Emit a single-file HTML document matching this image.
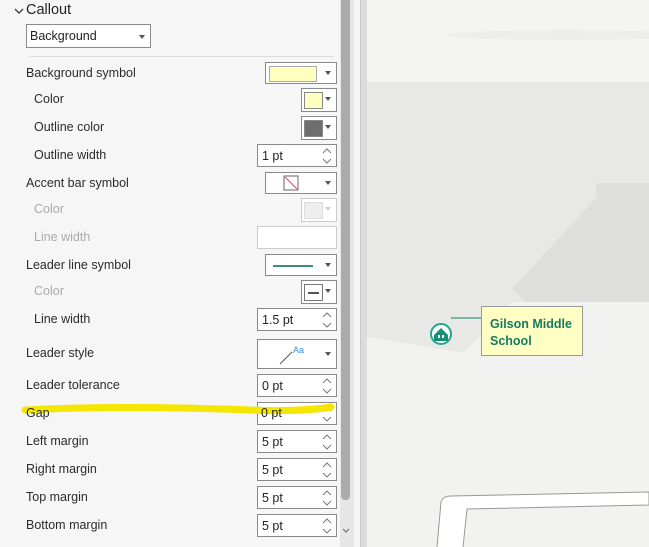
<!DOCTYPE html><html><head><style>
body{margin:0;width:649px;height:547px;overflow:hidden;background:#f5f6f5;font-family:"Liberation Sans",sans-serif;font-size:12.5px;color:#222;position:relative}
.a{position:absolute}
.lbl{position:absolute;left:26px;color:#2b2b2b}
.sub{left:34px}
.dis{color:#aaa}
.box{position:absolute;border:1px solid #8a8a8a;background:#fff;box-sizing:border-box}
.sp{left:257px;width:80px;height:23px}
.sp span{position:absolute;left:4px;top:4px}
.sp svg{position:absolute;right:4px;top:3px}
.dd{position:absolute;right:5px;top:8px;width:0;height:0;border-left:3px solid transparent;border-right:3px solid transparent;border-top:4px solid #555}
</style></head><body>
<svg class="a" style="left:14px;top:7px" width="10" height="8"><path d="M1 2 L5 6 L9 2" stroke="#444" stroke-width="1.4" fill="none"/></svg>
<div class="a" style="left:26px;top:2px;font-size:14.5px;color:#222">Callout</div>
<div class="box" style="left:26px;top:24px;width:125px;height:24px"><span class="a" style="left:3px;top:4px">Background</span><div class="dd" style="top:10px"></div></div>
<div class="a" style="left:29px;top:56px;width:305px;height:1px;background:#ddd"></div>

<div class="lbl" style="top:66px">Background symbol</div>
<div class="box" style="left:265px;top:62px;width:72px;height:22px"><div class="a" style="left:3px;top:3px;width:46px;height:14px;background:#ffffc0;border:1px solid #aaa"></div><div class="dd"></div></div>
<div class="lbl sub" style="top:92px">Color</div>
<div class="box" style="left:301px;top:88px;width:36px;height:24px"><div class="a" style="left:2px;top:3px;width:17px;height:15px;background:#ffffc0;border:1px solid #888"></div><div class="dd"></div></div>
<div class="lbl sub" style="top:120px">Outline color</div>
<div class="box" style="left:301px;top:116px;width:36px;height:24px"><div class="a" style="left:2px;top:3px;width:17px;height:15px;background:#6e6e6e;border:1px solid #888"></div><div class="dd"></div></div>
<div class="lbl sub" style="top:148px">Outline width</div>
<div class="box sp" style="top:144px"><span>1 pt</span><svg width="10" height="16"><path d="M1 5 L5 1 L9 5 M1 11 L5 15 L9 11" stroke="#777" fill="none"/></svg></div>
<div class="lbl" style="top:176px">Accent bar symbol</div>
<div class="box" style="left:265px;top:172px;width:72px;height:22px"><svg class="a" style="left:17px;top:2px" width="16" height="16"><rect x="1" y="1" width="14" height="14" fill="#fff" stroke="#666"/><line x1="2" y1="2" x2="14" y2="14" stroke="#c55"/></svg><div class="dd"></div></div>
<div class="lbl sub dis" style="top:202px">Color</div>
<div class="box" style="left:301px;top:198px;width:36px;height:24px;border-color:#ccc"><div class="a" style="left:2px;top:3px;width:17px;height:15px;background:#eee;border:1px solid #ddd"></div><div class="dd" style="border-top-color:#ccc"></div></div>
<div class="lbl sub dis" style="top:230px">Line width</div>
<div class="box" style="left:257px;top:226px;width:80px;height:23px;border-color:#ccc"></div>
<div class="lbl" style="top:258px">Leader line symbol</div>
<div class="box" style="left:265px;top:254px;width:72px;height:22px"><div class="a" style="left:7px;top:10px;width:40px;height:2px;background:#3b8e74"></div><div class="dd"></div></div>
<div class="lbl sub dis" style="top:284px">Color</div>
<div class="box" style="left:301px;top:280px;width:36px;height:24px"><div class="a" style="left:2px;top:3px;width:17px;height:15px;background:#fff;border:1px solid #777"><div class="a" style="left:3px;top:7px;width:11px;height:2px;background:#555"></div></div><div class="dd"></div></div>
<div class="lbl sub" style="top:312px">Line width</div>
<div class="box sp" style="top:308px"><span>1.5 pt</span><svg width="10" height="16"><path d="M1 5 L5 1 L9 5 M1 11 L5 15 L9 11" stroke="#777" fill="none"/></svg></div>
<div class="lbl" style="top:346px">Leader style</div>
<div class="box" style="left:257px;top:339px;width:80px;height:30px"><svg class="a" style="left:20px;top:2px" width="40" height="24"><line x1="2" y1="22" x2="14" y2="10" stroke="#555"/><text x="15" y="11" font-size="9" fill="#3a8fd8" font-family="Liberation Sans">Aa</text></svg><div class="dd" style="top:12px"></div></div>
<div class="lbl" style="top:378px">Leader tolerance</div>
<div class="box sp" style="top:374px"><span>0 pt</span><svg width="10" height="16"><path d="M1 5 L5 1 L9 5 M1 11 L5 15 L9 11" stroke="#777" fill="none"/></svg></div>
<div class="box sp" style="top:402px"><svg width="10" height="16"><path d="M1 5 L5 1 L9 5 M1 11 L5 15 L9 11" stroke="#777" fill="none"/></svg></div>
<svg class="a" style="left:0;top:0" width="340" height="547"><path d="M25 410 Q120 405 250 410 Q300 412 331 407" stroke="#f5e600" stroke-width="7" fill="none" stroke-linecap="round"/></svg>
<div class="lbl" style="top:406px">Gap</div>
<div class="a" style="left:261px;top:406px">0 pt</div>
<div class="lbl" style="top:434px">Left margin</div>
<div class="box sp" style="top:430px"><span>5 pt</span><svg width="10" height="16"><path d="M1 5 L5 1 L9 5 M1 11 L5 15 L9 11" stroke="#777" fill="none"/></svg></div>
<div class="lbl" style="top:462px">Right margin</div>
<div class="box sp" style="top:458px"><span>5 pt</span><svg width="10" height="16"><path d="M1 5 L5 1 L9 5 M1 11 L5 15 L9 11" stroke="#777" fill="none"/></svg></div>
<div class="lbl" style="top:490px">Top margin</div>
<div class="box sp" style="top:486px"><span>5 pt</span><svg width="10" height="16"><path d="M1 5 L5 1 L9 5 M1 11 L5 15 L9 11" stroke="#777" fill="none"/></svg></div>
<div class="lbl" style="top:518px">Bottom margin</div>
<div class="box sp" style="top:514px"><span>5 pt</span><svg width="10" height="16"><path d="M1 5 L5 1 L9 5 M1 11 L5 15 L9 11" stroke="#777" fill="none"/></svg></div>

<div class="a" style="left:340px;top:0;width:14px;height:547px;background:#e6e6e6"></div>
<div class="a" style="left:341px;top:0;width:9px;height:500px;background:#ababab;border-radius:0 0 4px 4px"></div>
<svg class="a" style="left:342px;top:528px" width="8" height="6"><path d="M1 1 L4 4 L7 1" stroke="#666" fill="none"/></svg>
<div class="a" style="left:360px;top:0;width:7px;height:547px;background:#dcdcdc;border-left:1px solid #c8c8c8"></div>

<svg class="a" style="left:367px;top:0" width="282" height="547">
<rect width="282" height="547" fill="#f2f2f1"/>
<rect width="282" height="82" fill="#f4f4f3"/>
<ellipse cx="200" cy="35" rx="120" ry="5" fill="#e8e8e6" opacity=".6"/>
<path d="M0 82 H282 V302 L145 302 L120 330 L96 353 L0 337 Z" fill="#e8e8e7"/>
<path d="M229 183 H282 V302 H160 L145 289 L230 197 Z" fill="#dededd"/>
<path d="M70 547 L74 502 Q76 496 84 496 L282 492 V505 L100 509 L96 547" fill="#fff" stroke="#999" stroke-width="1"/>
<circle cx="74" cy="334" r="10" fill="#fff" stroke="#1fa88a" stroke-width="2"/>
<path d="M67 335 L74 328 L81 335 V341 H67 Z" fill="#1a8f74"/>
<rect x="71" y="335" width="2" height="3" fill="#fff"/><rect x="75" y="335" width="2" height="3" fill="#fff"/>
<line x1="84" y1="318" x2="115" y2="318" stroke="#1a7f65" stroke-width="1"/>
</svg>
<div class="a" style="left:481px;top:306px;width:102px;height:50px;background:#ffffc4;border:1px solid #999;box-sizing:border-box"></div>
<div class="a" style="left:490px;top:316px;font-size:12.5px;font-weight:bold;color:#187a62;line-height:17px">Gilson Middle<br>School</div>
</body></html>
